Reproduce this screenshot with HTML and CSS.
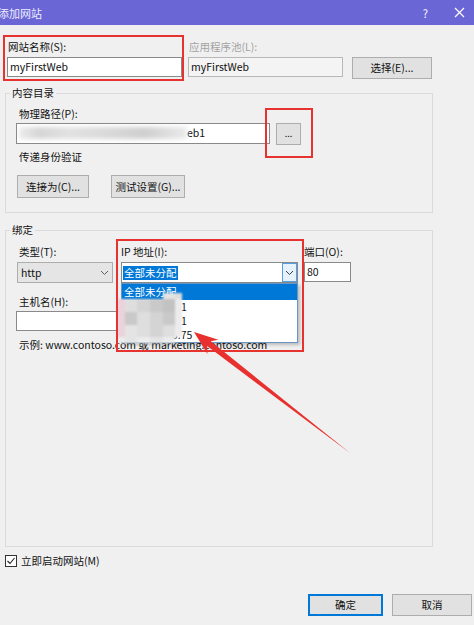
FILE: index.html
```html
<!DOCTYPE html>
<html lang="zh-CN">
<head>
  <meta charset="UTF-8" />
  <title>添加网站</title>
  <meta name="viewport" content="width=device-width, initial-scale=1.0" />
  <link rel="stylesheet" href="styles.css">
</head>
<body>
  <div class="dialog">
    <div class="titlebar">
      <span class="title">添加网站</span>
      <div class="title-actions">
        <span class="help">?</span>
        <svg class="close" width="11" height="11" viewBox="0 0 11 11"><path d="M1 1L10 10M10 1L1 10" stroke="#fff" stroke-width="1.2" fill="none"/></svg>
      </div>
    </div>

    <div class="dialog-body">
      <div class="site-row">
        <div class="field name-field">
          <div class="label">网站名称(S):</div>
          <div class="textbox">myFirstWeb</div>
        </div>
        <div class="field pool-field">
          <div class="label muted">应用程序池(L):</div>
          <div class="pool-line">
            <div class="textbox readonly">myFirstWeb</div>
            <button class="btn pick-btn">选择(E)...</button>
          </div>
        </div>
      </div>

      <fieldset class="group dir-group">
        <legend>内容目录</legend>
        <div class="label">物理路径(P):</div>
        <div class="path-line">
          <div class="textbox path-box"><span class="masked"></span>eb1</div>
          <button class="btn browse-btn">...</button>
        </div>
        <div class="label pass-label">传递身份验证</div>
        <div class="auth-buttons">
          <button class="btn connect-btn">连接为(C)...</button>
          <button class="btn test-btn">测试设置(G)...</button>
        </div>
      </fieldset>

      <fieldset class="group bind-group">
        <legend>绑定</legend>
        <div class="bind-row">
          <div class="field type-field">
            <div class="label">类型(T):</div>
            <div class="combo">
              <span>http</span>
              <svg class="chevron" width="9" height="6" viewBox="0 0 9 6"><path d="M1 1L4.5 4.5L8 1" stroke="#606060" fill="none"/></svg>
            </div>
          </div>
          <div class="field ip-field">
            <div class="label">IP 地址(I):</div>
            <div class="combo combo-open">
              <span class="sel">全部未分配</span>
              <span class="drop-btn">
                <svg class="chevron" width="9" height="6" viewBox="0 0 9 6"><path d="M1 1L4.5 4.5L8 1" stroke="#404040" fill="none"/></svg>
              </span>
            </div>
            <ul class="drop-list">
              <li class="active">全部未分配</li>
              <li class="tail">.1</li>
              <li class="tail">.1</li>
              <li class="tail tail-wide">0.75</li>
            </ul>
            <div class="mosaic">
              <i class="m0"></i><i class="m0"></i><i class="m0"></i><i class="m0"></i><i class="m6"></i><i class="m4"></i>
              <i class="m1"></i><i class="m4"></i><i class="m2"></i><i class="m3"></i><i class="m5"></i><i class="m7"></i>
              <i class="m1"></i><i class="m3"></i><i class="m4"></i><i class="m2"></i><i class="m3"></i><i class="m7"></i>
              <i class="m1"></i><i class="m6"></i><i class="m4"></i><i class="m2"></i><i class="m4"></i><i class="m7"></i>
              <i class="m7"></i><i class="m6"></i><i class="m7"></i><i class="m6"></i><i class="m7"></i><i class="m0"></i>
            </div>
          </div>
          <div class="field port-field">
            <div class="label">端口(O):</div>
            <div class="textbox port-box">80</div>
          </div>
        </div>
        <div class="label host-label">主机名(H):</div>
        <div class="textbox host-box"></div>
        <div class="hint">示例: www.contoso.com 或 marketing.contoso.com</div>
      </fieldset>

      <div class="check-row">
        <span class="checkbox">
          <svg width="10" height="10" viewBox="0 0 10 10"><path d="M1.5 5L4 7.5L8.5 2" stroke="#222" stroke-width="1.1" fill="none"/></svg>
        </span>
        <span>立即启动网站(M)</span>
      </div>

      <div class="footer">
        <button class="btn primary ok-btn">确定</button>
        <button class="btn cancel-btn">取消</button>
      </div>
    </div>

    <!-- red call-outs drawn over the form -->
    <div class="mark mark-name"></div>
    <div class="mark mark-browse"></div>
    <div class="mark mark-ip"></div>
    <svg class="pointer" width="474" height="625" viewBox="0 0 474 625">
      <polygon points="194,332 218.4,339.7 210.8,341.3 350,453 207.2,346.1 207.4,353.9" fill="#e8302e"/>
    </svg>
  </div>
</body>
</html>
```

FILE: styles.css
```css
html, body {
  margin: 0;
  padding: 0;
  background: #f0f0f0;
}

body {
  font-family: "Noto Sans CJK SC", "Noto Sans", sans-serif;
  font-size: 10.5px;
  line-height: 14px;
  color: #111;
}

* {
  box-sizing: border-box;
}

.dialog {
  position: relative;
  width: 474px;
  height: 625px;
  background: #f0f0f0;
  overflow: hidden;
}

/* title bar */
.titlebar {
  height: 25px;
  background: #6a66d5;
  color: #fff;
  display: flex;
  align-items: center;
  justify-content: space-between;
}

.title {
  margin-left: -2px;
  font-size: 11px;
  color: #eeeeff;
}

.title-actions {
  display: flex;
  align-items: center;
  gap: 26px;
  padding-right: 9px;
}

.help {
  font-size: 11px;
}

.close {
  display: block;
}

/* shared controls */
.dialog-body {
  padding: 15px 0 0 5px;
}

.label {
  padding-left: 3px;
  white-space: nowrap;
}

.muted {
  color: #a2a2a2;
}

.textbox {
  height: 20px;
  border: 1px solid #8a8a8a;
  background: #fff;
  padding: 2px 2px 0;
  white-space: nowrap;
  overflow: hidden;
}

.textbox.readonly {
  background: #f4f4f4;
  border-color: #b8b8b8;
}

.btn {
  font: inherit;
  color: #111;
  height: 23px;
  padding: 0;
  border: 1px solid #adadad;
  background: #e1e1e1;
}

.btn.primary {
  border: 2px solid #0078d7;
}

/* site name / app pool */
.site-row {
  display: flex;
  padding-left: 2px;
}

.site-row .label {
  padding-left: 1px;
  margin-bottom: 3px;
}

.name-field {
  width: 175px;
}

.pool-field {
  margin-left: 6px;
}

.pool-line {
  display: flex;
}

.pool-line .textbox {
  width: 155px;
}

.pick-btn {
  width: 80px;
  height: 22px;
  margin-left: 9px;
}

/* group boxes */
.group {
  margin: 0;
  width: 428px;
  padding: 0 10px 14px;
  border: 1px solid #dadada;
  min-width: 0;
}

.group legend {
  padding: 0 2px;
  margin-left: -6px;
  line-height: 14px;
}

.dir-group {
  margin-top: 7px;
}

.dir-group > .label:first-of-type {
  margin-top: 7px;
}

.path-line {
  display: flex;
  margin-top: 2px;
}

.path-box {
  width: 254px;
  height: 21px;
}

.masked {
  display: inline-block;
  width: 168px;
  height: 12px;
  vertical-align: -2px;
  background: linear-gradient(90deg, #ececec 0%, #d6d6d6 12%, #e2e2e2 30%, #d8d8d8 55%, #cfcfcf 75%, #ebebeb 100%);
  filter: blur(2px);
}

.browse-btn {
  width: 25px;
  height: 22px;
  margin-left: 6px;
  font-size: 9px;
}

.pass-label {
  margin-top: 5px;
}

.auth-buttons {
  display: flex;
  gap: 22px;
  margin-top: 11px;
  padding-left: 1px;
}

.connect-btn {
  width: 72px;
}

.test-btn {
  width: 74px;
}

/* bindings */
.bind-group {
  margin-top: 10px;
  padding-bottom: 194px;
}

.bind-row {
  display: flex;
  margin-top: 8px;
  padding-left: 1px;
}

.bind-row .label {
  margin-bottom: 3px;
}

.type-field {
  width: 96px;
}

.type-field .label {
  padding-left: 2px;
}

.ip-field {
  position: relative;
  width: 177px;
  margin-left: 8px;
}

.ip-field .label,
.port-field .label {
  padding-left: 0;
}

.port-field {
  width: 47px;
  margin-left: 6px;
}

.combo {
  height: 21px;
  display: flex;
  align-items: center;
  justify-content: space-between;
  border: 1px solid #adadad;
  background: #e5e5e5;
  padding-left: 3px;
  padding-right: 3px;
}

.combo-open {
  background: #fff;
  border-color: #8a8a8a;
  padding: 0;
}

.sel {
  margin-left: 1px;
  padding: 0 1px;
  background: #0078d7;
  color: #fff;
}

.drop-btn {
  width: 15px;
  height: 19px;
  display: flex;
  align-items: center;
  justify-content: center;
  border: 1px solid #569de5;
  background: #e5f1fb;
}

.chevron {
  display: block;
}

.port-box {
  height: 20px;
}

.drop-list {
  position: absolute;
  top: 38px;
  left: 0;
  width: 177px;
  margin: 0;
  padding: 0;
  list-style: none;
  background: #fff;
  border: 1px solid #6b96c4;
  box-shadow: 2px 2px 3px rgba(0, 0, 0, 0.22);
}

.drop-list li {
  height: 14px;
  line-height: 14px;
  padding-left: 2px;
}

.drop-list li.active {
  height: 16px;
  line-height: 16px;
  background: #0078d7;
  color: #fff;
}

.drop-list li.tail {
  padding-left: 56px;
}

.drop-list li.tail-wide {
  padding-left: 50px;
}

/* pixelated cover over the address list */
.mosaic {
  position: absolute;
  left: -4px;
  top: 48px;
  width: 65px;
  height: 50px;
  display: grid;
  grid-template-columns: 8px 12px 13px 13px 12px 7px;
  grid-template-rows: 6px 13px 13px 12px 6px;
  filter: blur(0.8px);
}

.mosaic i { display: block; }
.mosaic .m0 { background: transparent; }
.mosaic .m1 { background: #ecd2dc; }
.mosaic .m2 { background: #d4d4d4; }
.mosaic .m3 { background: #c9c9c9; }
.mosaic .m4 { background: #dedede; }
.mosaic .m5 { background: #c2c2c2; }
.mosaic .m6 { background: #e4e4e4; }
.mosaic .m7 { background: #ececec; }

.host-label {
  margin-top: 12px;
}

.host-box {
  width: 272px;
  margin-top: 2px;
}

.hint {
  margin-top: 7px;
  padding-left: 3px;
}

/* bottom */
.check-row {
  display: flex;
  align-items: center;
  gap: 4px;
  margin-top: 7px;
  height: 14px;
}

.checkbox {
  width: 12px;
  height: 12px;
  border: 1px solid #333;
  background: #fff;
  display: flex;
  align-items: center;
  justify-content: center;
}

.checkbox svg {
  display: block;
}

.footer {
  display: flex;
  justify-content: flex-end;
  gap: 9px;
  margin-top: 26px;
  padding-right: 2px;
}

.ok-btn {
  width: 75px;
  height: 22px;
}

.cancel-btn {
  width: 80px;
  height: 22px;
}

/* annotations */
.mark {
  position: absolute;
  border: 2px solid #e6332f;
}

.mark-name {
  left: 3px;
  top: 35px;
  width: 181px;
  height: 46px;
}

.mark-browse {
  left: 265px;
  top: 108px;
  width: 48px;
  height: 50px;
}

.mark-ip {
  left: 116px;
  top: 239px;
  width: 188px;
  height: 113px;
}

.pointer {
  position: absolute;
  left: 0;
  top: 0;
  pointer-events: none;
}
```
